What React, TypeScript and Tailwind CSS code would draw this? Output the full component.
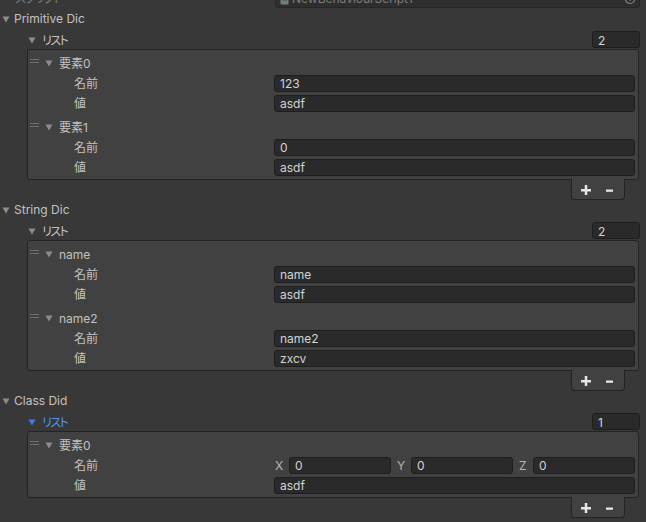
import React from 'react';

type Entry = {
  title: string;
  name?: string;
  vector?: [string, string, string];
  value: string;
};

type Section = {
  title: string;
  count: string;
  focused?: boolean;
  entries: Entry[];
};

const SECTIONS: Section[] = [
  {
    title: 'Primitive Dic',
    count: '2',
    entries: [
      { title: '要素0', name: '123', value: 'asdf' },
      { title: '要素1', name: '0', value: 'asdf' },
    ],
  },
  {
    title: 'String Dic',
    count: '2',
    entries: [
      { title: 'name', name: 'name', value: 'asdf' },
      { title: 'name2', name: 'name2', value: 'zxcv' },
    ],
  },
  {
    title: 'Class Did',
    count: '1',
    focused: true,
    entries: [{ title: '要素0', vector: ['0', '0', '0'], value: 'asdf' }],
  },
];

function Tri({ color = '#8d8d8d' }: { color?: string }) {
  return (
    <svg width="8" height="8" viewBox="0 0 8 8" className="shrink-0">
      <path d="M0.5 1.5h7L4 7.5z" fill={color} />
    </svg>
  );
}

function Handle() {
  return (
    <svg width="9" height="8" viewBox="0 0 9 8" className="shrink-0">
      <rect x="0" y="0" width="9" height="1" fill="#707070" />
      <rect x="0" y="3" width="9" height="1" fill="#707070" />
    </svg>
  );
}

function TextField({ value, className = '' }: { value: string; className?: string }) {
  return (
    <div
      className={`h-[17px] flex items-center pl-[5px] pt-[2px] bg-[#2a2a2a] border border-[#1e1e1e] rounded-[3px] text-[#d2d2d2] leading-none ${className}`}
    >
      {value}
    </div>
  );
}

function FieldRow({ label, children }: { label: string; children: React.ReactNode }) {
  return (
    <div className="h-[20px] flex items-center pl-[46px] pr-[3px]">
      <span className="w-[200px] shrink-0 pt-[2px]">{label}</span>
      {children}
    </div>
  );
}

function EntryBlock({ entry }: { entry: Entry }) {
  return (
    <div className="flex flex-col">
      <div className="h-[20px] flex items-center pl-[2px]">
        <Handle />
        <span className="ml-[6px]">
          <Tri />
        </span>
        <span className="ml-[6px] pt-[2px]">{entry.title}</span>
      </div>
      <FieldRow label="名前">
        {entry.vector ? (
          <div className="flex-1 grid grid-cols-3 gap-[5px]">
            {(['X', 'Y', 'Z'] as const).map((axis, i) => (
              <div key={axis} className="flex items-center">
                <span className="w-[15px] shrink-0 pl-[1px] pt-[2px] text-[#b5b5b5]">{axis}</span>
                <TextField value={entry.vector![i]} className="flex-1" />
              </div>
            ))}
          </div>
        ) : (
          <TextField value={entry.name ?? ''} className="flex-1" />
        )}
      </FieldRow>
      <FieldRow label="値">
        <TextField value={entry.value} className="flex-1" />
      </FieldRow>
    </div>
  );
}

function DictSection({ section }: { section: Section }) {
  return (
    <div className="flex flex-col mb-[1px]">
      <div className="h-[18px] flex items-center pl-[2px]">
        <Tri />
        <span className="ml-[4px]">{section.title}</span>
      </div>
      <div className="mt-[3px] h-[18px] flex items-center pl-[28px] pr-[6px]">
        <Tri color={section.focused ? '#3d7de6' : '#8d8d8d'} />
        <span
          className={`ml-[6px] pt-[2px] tracking-[-1.5px] [font-feature-settings:'palt'] ${section.focused ? 'text-[#5592ee]' : ''}`}
        >
          リスト
        </span>
        <TextField value={section.count} className="ml-auto w-[48px] mb-[1px]" />
      </div>
      <div className="ml-[27px] mr-[7px] bg-[#414141] border border-[#232323] rounded-[3px] pt-[3px] pb-[2px] flex flex-col gap-[4px]">
        {section.entries.map((e) => (
          <EntryBlock key={e.title} entry={e} />
        ))}
      </div>
      <div className="self-end mr-[21px] -mt-px w-[54px] h-[21px] bg-[#414141] border border-t-0 border-[#232323] rounded-b-[4px] flex items-center pt-[2px] pl-[9px]">
        <svg width="10" height="10" viewBox="0 0 10 10">
          <rect x="0" y="4" width="10" height="2.5" fill="#e6e6e6" />
          <rect x="3.75" y="0" width="2.5" height="10" fill="#e6e6e6" />
        </svg>
        <svg width="7" height="3" viewBox="0 0 7 3" className="ml-[15px]">
          <rect x="0" y="0.5" width="7" height="2.3" fill="#e6e6e6" />
        </svg>
      </div>
    </div>
  );
}

export default function App() {
  return (
    <div className="w-[646px] h-[522px] overflow-hidden bg-[#383838] text-[12px] text-[#c2c2c2] [font-family:Inter,'Noto_Sans_CJK_JP',sans-serif]">
      {/* script reference row, mostly scrolled out of view */}
      <div className="-mt-[10px] mb-[2px] h-[18px] flex items-center pl-[15px] pr-[6px]">
        <span className="w-[260px] shrink-0 text-[#7c7c7c] tracking-[-1px] [font-feature-settings:'palt']">スクリプト</span>
        <div className="flex-1 h-[18px] flex items-center bg-[#2e2e2e] border border-[#262626] rounded-[3px] pl-[4px] pr-[3px] text-[#7c7c7c]">
          <svg width="9" height="11" viewBox="0 0 9 11" className="shrink-0">
            <rect x="0.5" y="0.5" width="8" height="10" rx="1" fill="#7a7a7a" />
            <rect x="2" y="3" width="5" height="1" fill="#4e6b4e" />
            <rect x="2" y="6" width="5" height="1" fill="#4e6b4e" />
          </svg>
          <span className="ml-[3px]">NewBehaviourScript1</span>
          <svg width="12" height="12" viewBox="0 0 12 12" className="ml-auto shrink-0">
            <circle cx="6" cy="6" r="4.5" fill="none" stroke="#8a8a8a" strokeWidth="1.2" />
            <circle cx="6" cy="6" r="1.5" fill="#8a8a8a" />
          </svg>
        </div>
      </div>
      {SECTIONS.map((s) => (
        <DictSection key={s.title} section={s} />
      ))}
    </div>
  );
}
